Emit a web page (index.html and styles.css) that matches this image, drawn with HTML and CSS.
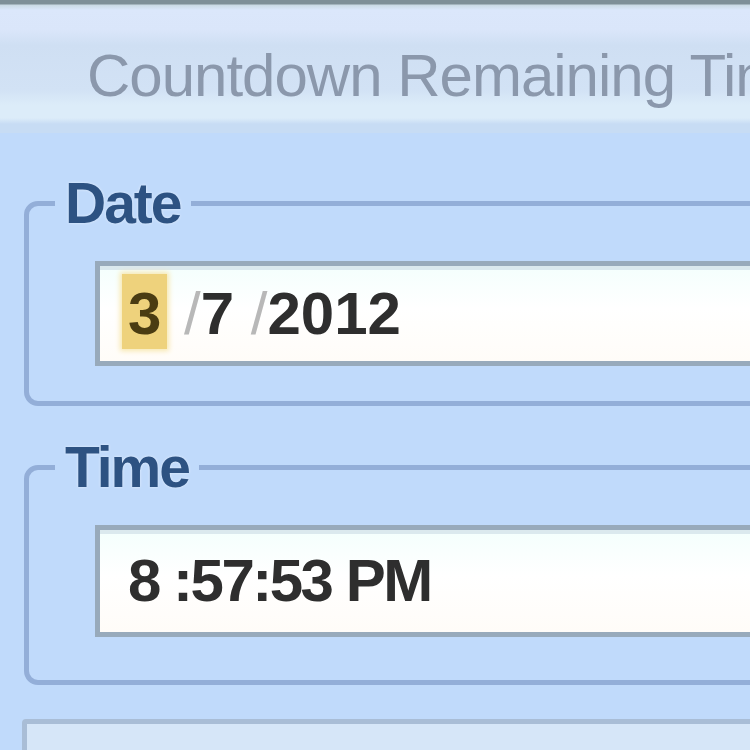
FILE: index.html
```html
<!DOCTYPE html>
<html>
  <head>
    <title>Countdown Remaining Time</title>
    <link rel="stylesheet" href="styles.css">
  </head>
  <body>
    <div class="window">
      <header class="titlebar">
        <h1 class="title">Countdown Remaining Time</h1>
      </header>

      <main class="client">
        <fieldset class="group">
          <legend>Date</legend>
          <div class="field field-date">
            <span class="seg active">3</span> <span class="sep">/</span>7 <span class="sep">/</span>2012
          </div>
        </fieldset>

        <fieldset class="group group-time">
          <legend>Time</legend>
          <div class="field field-time">8 :57:53 PM</div>
        </fieldset>

        <div class="panel"></div>
      </main>
    </div>
  </body>
</html>
```

FILE: styles.css
```css
* {
  font-family: "Liberation Sans", Arial, sans-serif;
  box-sizing: border-box;
}
body {
  margin: 0;
  overflow: hidden;
  background: #c0dafb;
}
.window {
  width: 1100px;
}

/* caption */
.titlebar {
  height: 133px;
  padding: 46px 0 0 87px;
  background: linear-gradient(
    #7e8f97 0 4px,
    #c9d9e3 5px,
    #dbe7fb 10px,
    #dae6fa 30px,
    #cfdff3 45px,
    #d2e2f5 90px,
    #dcecf9 105px,
    #dcecf9 118px,
    #c7dcf4 124px
  );
}
.title {
  margin: 0;
  font-size: 60px;
  line-height: 60px;
  font-weight: normal;
  letter-spacing: -1px;
  white-space: nowrap;
  color: #8b98ac;
}

/* client area */
.client {
  display: flex;
  flex-direction: column;
  padding: 40px 0 0 24px;
}
.group {
  margin: 0;
  padding: 28px 0 35px 0;
  border: 5px solid #93aed8;
  border-radius: 14px;
  min-width: 0;
}
.group legend {
  margin-left: 26px;
  padding: 0 10px;
  font-size: 57px;
  line-height: 60px;
  font-weight: bold;
  letter-spacing: -2px;
  color: #2d5282;
  text-shadow: 0 0 3px rgba(255, 255, 255, 0.6);
}
.group-time {
  margin-top: 31px;
  padding-bottom: 43px;
}

.field {
  margin-left: 66px;
  height: 105px;
  padding: 18px 0 0 28px;
  border: 5px solid #98aabb;
  box-shadow: inset 0 4px 0 #dbe9ee;
  background: linear-gradient(#f4fffd, #ffffff 45%, #fffcf8);
  font-size: 60px;
  line-height: 60px;
  font-weight: bold;
  white-space: nowrap;
  color: #2e2e2e;
}
.field-date {
  padding-left: 22px;
}
.field-time {
  height: 112px;
  padding-top: 21px;
  letter-spacing: -2.5px;
}
.seg.active {
  padding: 6px 6px 2px;
  color: #4a3c12;
  background: #eed27c;
  box-shadow: 0 0 5px 2px #f7e7ae;
}
.sep {
  font-weight: normal;
  color: #b8b8b8;
}

.panel {
  margin: 34px 0 0 -2px;
  height: 100px;
  border: 5px solid #a9bdd6;
  border-radius: 4px;
  background: #d6e6f8;
}
```
